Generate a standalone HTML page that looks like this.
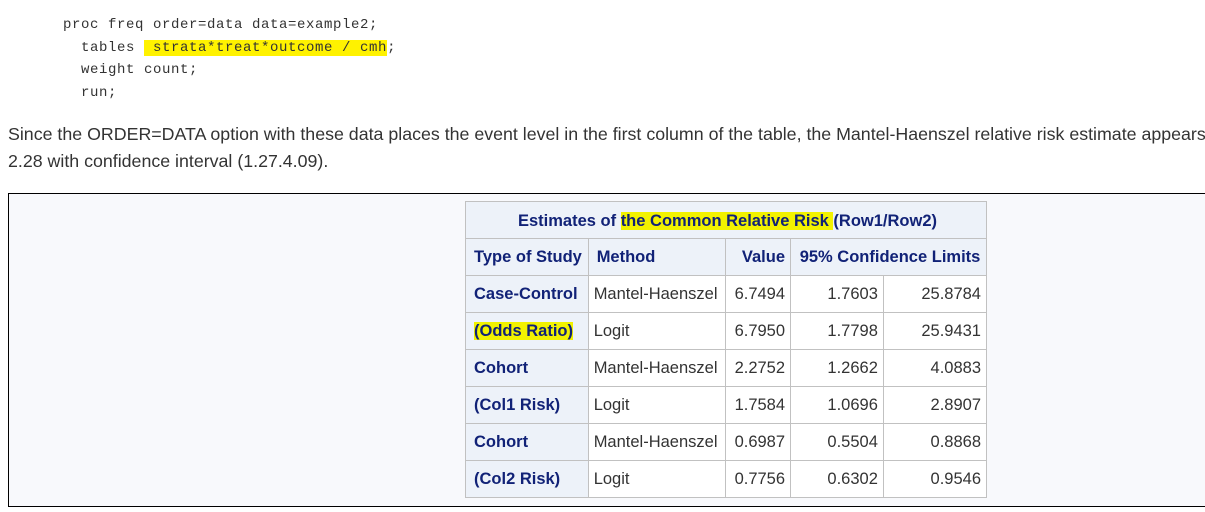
<!DOCTYPE html>
<html><head><style>
body{margin:0;width:1205px;height:512px;overflow:hidden;background:#fff;font-family:"Liberation Sans",Arial,sans-serif;}
pre{position:absolute;left:63px;top:14px;margin:0;font-family:"Liberation Mono","Noto Sans CJK SC",monospace;font-size:14px;line-height:22.7px;color:#333;letter-spacing:0.6px}
.hl{background:#fff200}
p{position:absolute;left:8px;top:121px;margin:0;font-size:17.8px;line-height:27px;color:#333;white-space:nowrap}
.box{position:absolute;left:8px;top:193px;width:1210px;height:312px;border:1px solid #000;border-right:none;background:#f8f9fc}
table{position:absolute;left:465px;top:201px;border-collapse:collapse;font-size:16.5px;color:#333}
td,th{border:1px solid #c1c1c1;height:36px;padding:0 5px;white-space:nowrap;font-weight:normal;line-height:19px}
th{color:#112277;font-weight:bold;background:#edf2f9;text-align:left;padding-left:8px}
td{background:#fff;text-align:right}
td.l{text-align:left}
</style></head><body>
<pre>proc freq order=data data=example2;
  tables <span class="hl"> strata*treat*outcome / cmh</span>;
  weight count;
  run;</pre>
<p>Since the ORDER=DATA option with these data places the event level in the first column of the table, the Mantel-Haenszel relative risk estimate appears<br>2.28 with confidence interval (1.27.4.09).</p>
<div class="box"></div>
<table>
<tr><th colspan="5" style="text-align:center;width:507px;padding-top:2px;height:34px">Estimates of <span class="hl" style="background:#f2f200">the Common Relative Risk </span>(Row1/Row2)</th></tr>
<tr><th style="width:104px">Type of Study</th><th style="width:122px">Method</th><th style="width:51px;text-align:right">Value</th><th colspan="2" style="text-align:center">95% Confidence Limits</th></tr>
<tr><th>Case-Control</th><td class="l">Mantel-Haenszel</td><td>6.7494</td><td style="width:80px">1.7603</td><td style="width:90px">25.8784</td></tr>
<tr><th><span class="hl" style="background:#f2f200">(Odds Ratio)</span></th><td class="l">Logit</td><td>6.7950</td><td>1.7798</td><td>25.9431</td></tr>
<tr><th>Cohort</th><td class="l">Mantel-Haenszel</td><td>2.2752</td><td>1.2662</td><td>4.0883</td></tr>
<tr><th>(Col1 Risk)</th><td class="l">Logit</td><td>1.7584</td><td>1.0696</td><td>2.8907</td></tr>
<tr><th>Cohort</th><td class="l">Mantel-Haenszel</td><td>0.6987</td><td>0.5504</td><td>0.8868</td></tr>
<tr><th>(Col2 Risk)</th><td class="l">Logit</td><td>0.7756</td><td>0.6302</td><td>0.9546</td></tr>
</table>
</body></html>
